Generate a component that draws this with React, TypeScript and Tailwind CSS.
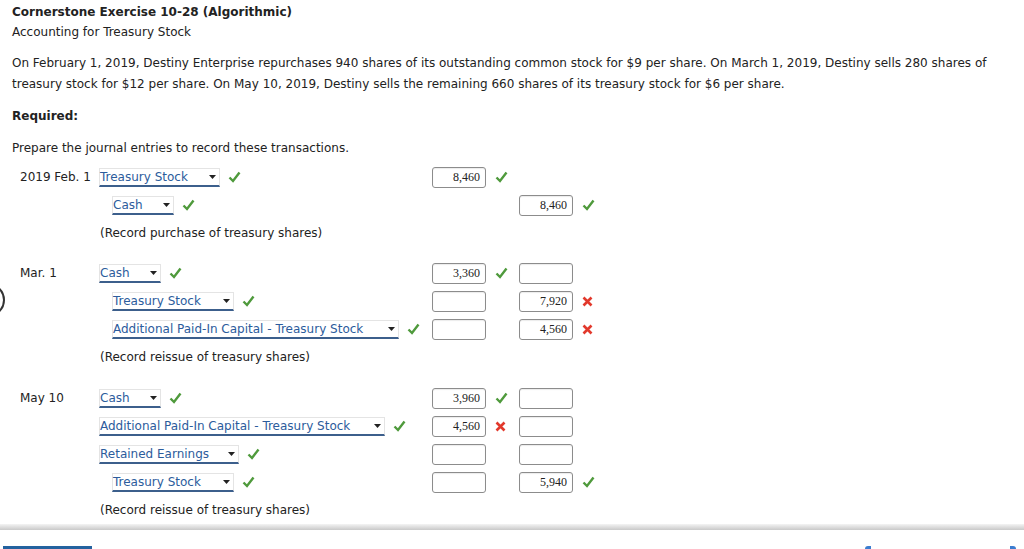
import React from "react";

type Mark = "ok" | "bad" | null;

interface Line {
  acct: string;
  indent: boolean;
  w: number;
  debit?: string | null; // undefined = no field
  dMark?: Mark;
  credit?: string | null;
  cMark?: Mark;
}

interface Entry {
  date: string;
  lines: Line[];
  note: string;
  gapTop: string;
}

const entries: Entry[] = [
  {
    date: "2019 Feb. 1",
    gapTop: "mt-[5px]",
    lines: [
      { acct: "Treasury Stock", indent: false, w: 121, debit: "8,460", dMark: "ok" },
      { acct: "Cash", indent: true, w: 62, credit: "8,460", cMark: "ok" },
    ],
    note: "(Record purchase of treasury shares)",
  },
  {
    date: "Mar. 1",
    gapTop: "mt-[12px]",
    lines: [
      { acct: "Cash", indent: false, w: 62, debit: "3,360", dMark: "ok", credit: "" },
      { acct: "Treasury Stock", indent: true, w: 122, debit: "", credit: "7,920", cMark: "bad" },
      { acct: "Additional Paid-In Capital - Treasury Stock", indent: true, w: 287, debit: "", credit: "4,560", cMark: "bad" },
    ],
    note: "(Record reissue of treasury shares)",
  },
  {
    date: "May 10",
    gapTop: "mt-[13px]",
    lines: [
      { acct: "Cash", indent: false, w: 62, debit: "3,960", dMark: "ok", credit: "" },
      { acct: "Additional Paid-In Capital - Treasury Stock", indent: false, w: 286, debit: "4,560", dMark: "bad", credit: "" },
      { acct: "Retained Earnings", indent: false, w: 140, debit: "", credit: "" },
      { acct: "Treasury Stock", indent: true, w: 122, debit: "", credit: "5,940", cMark: "ok" },
    ],
    note: "(Record reissue of treasury shares)",
  },
];

function Check() {
  return (
    <svg width="13" height="12" viewBox="0 0 13 12">
      <path d="M1.5 6.5 L5 10 L11.5 1.5" fill="none" stroke="#4f9a3c" strokeWidth="2.4" />
    </svg>
  );
}

function Cross() {
  return (
    <svg width="11" height="11" viewBox="0 0 11 11">
      <path d="M1.5 1.5 L9.5 9.5 M9.5 1.5 L1.5 9.5" stroke="#e2392c" strokeWidth="2.6" />
    </svg>
  );
}

function MarkIcon({ m }: { m?: Mark }) {
  if (m === "ok") return <Check />;
  if (m === "bad") return <Cross />;
  return null;
}

function AcctSelect({ label, w }: { label: string; w: number }) {
  return (
    <div
      className="h-[19px] flex items-center justify-between bg-white border border-[#e4e4e4] border-b-2 border-b-[#3c5f8c] pr-[3px] text-[#2c5c9c]"
      style={{ width: w }}
    >
      <span className="leading-none">{label}</span>
      <svg width="7" height="4" viewBox="0 0 7 4">
        <path d="M0 0 L7 0 L3.5 4 Z" fill="#222" />
      </svg>
    </div>
  );
}

function Amount({ v }: { v: string }) {
  return (
    <div className="w-[54px] h-[21px] rounded-[3px] border border-[#8c8c8c] shadow-[inset_0_1px_1px_rgba(0,0,0,0.08)] flex items-center justify-end pr-[5px] text-[12px] text-[#222] font-['Liberation_Serif',serif]">
      {v}
    </div>
  );
}

function Row({ line }: { line: Line }) {
  return (
    <div className="flex items-center h-[28px]">
      <div className={`w-[333px] flex items-center gap-[8px] ${line.indent ? "pl-[13px]" : ""}`}>
        <AcctSelect label={line.acct} w={line.w} />
        <Check />
      </div>
      <div className="w-[87px] flex items-center gap-[9px]">
        {line.debit !== undefined && <Amount v={line.debit ?? ""} />}
        <MarkIcon m={line.dMark} />
      </div>
      <div className="flex items-center gap-[9px]">
        {line.credit !== undefined && <Amount v={line.credit ?? ""} />}
        <MarkIcon m={line.cMark} />
      </div>
    </div>
  );
}

export default function App() {
  return (
    <div className="relative w-[1024px] h-[549px] overflow-hidden bg-white text-[12px] text-[#222] font-['DejaVu_Sans','Verdana',sans-serif]">
      {/* partial circle at the left edge */}
      <svg className="absolute left-0 top-[283px]" width="8" height="34" viewBox="0 0 8 34">
        <circle cx="-12" cy="17" r="16" fill="none" stroke="#333" strokeWidth="2" />
      </svg>

      <div className="px-[12px] pt-[2px]">
        <h1 className="font-bold leading-[20px]">Cornerstone Exercise 10-28 (Algorithmic)</h1>
        <p className="leading-[20px]">Accounting for Treasury Stock</p>
        <p className="mt-[11px] leading-[21px] pr-[20px]">
          On February 1, 2019, Destiny Enterprise repurchases 940 shares of its outstanding common stock for $9 per share. On March 1, 2019, Destiny sells 280 shares of treasury stock for $12 per share. On May 10, 2019, Destiny sells the remaining 660 shares of its treasury stock for $6 per share.
        </p>
        <p className="mt-[11px] font-bold leading-[20px]">Required:</p>
        <p className="mt-[12px] leading-[20px]">Prepare the journal entries to record these transactions.</p>
      </div>

      <div className="pl-[20px]">
        {entries.map((e) => (
          <div key={e.date} className={`flex ${e.gapTop}`}>
            <div className="w-[79px] h-[28px] flex items-center">{e.date}</div>
            <div>
              {e.lines.map((l, i) => (
                <Row key={i} line={l} />
              ))}
              <div className="h-[28px] flex items-center pl-[1px]">{e.note}</div>
            </div>
          </div>
        ))}
      </div>

      {/* footer strip */}
      <div className="absolute left-0 right-0 top-[524px] h-[6px] bg-gradient-to-b from-[#f4f4f4] to-[#c9c9c9]" />
      <div className="absolute left-0 right-0 top-[546px] flex justify-between">
        <div className="ml-[3px] w-[89px] h-[3px] bg-[#23629f]" />
        <div className="mr-[8px] w-[151px] flex justify-between">
          <div className="w-[6px] h-[3px] rounded-tl-[3px] bg-[#3b7dd0]" />
          <div className="w-[6px] h-[3px] rounded-tr-[3px] bg-[#3b7dd0]" />
        </div>
      </div>
    </div>
  );
}
